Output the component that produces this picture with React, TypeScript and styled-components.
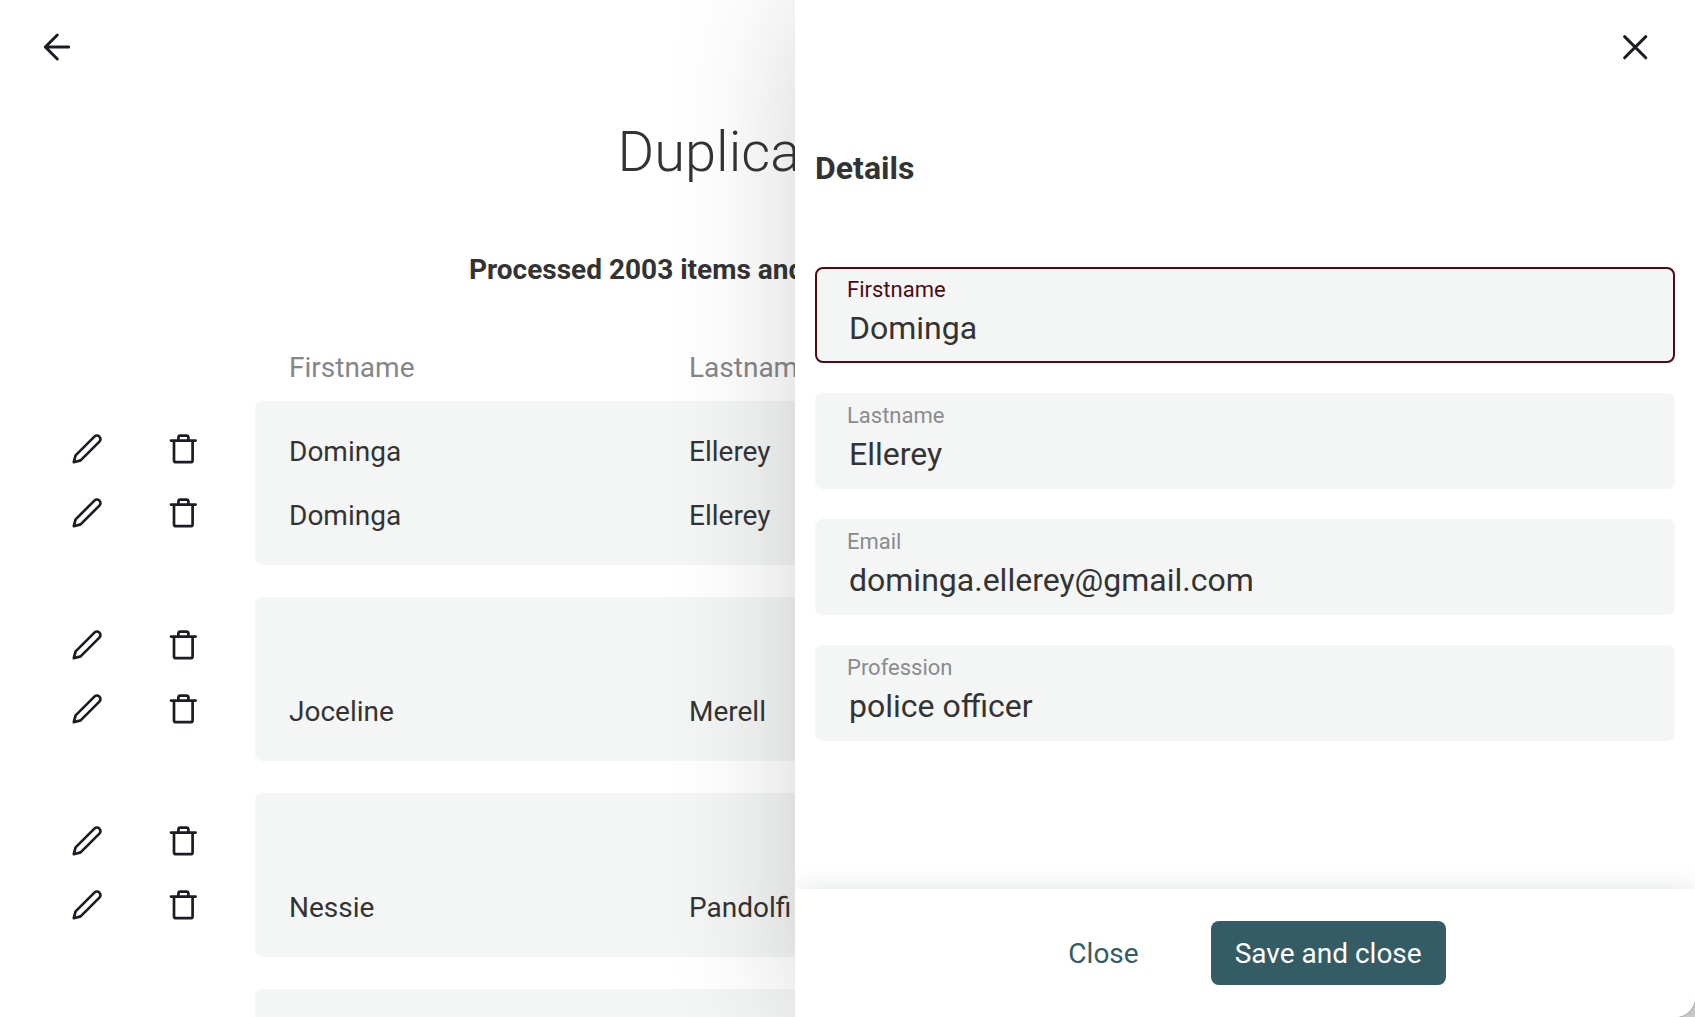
import React from "react";
import styled, { createGlobalStyle } from "styled-components";

const GlobalStyle = createGlobalStyle`
  *, *::before, *::after { box-sizing: border-box; }
  body {
    margin: 0;
    background: #c9c9ca;
    color: #333;
    font-family: Roboto, "Liberation Sans", sans-serif;
    font-size: 28px;
    line-height: 36px;
  }
  button, input { font-family: inherit; }
`;

const Shell = styled.div`
  position: relative;
  height: 100vh;
  overflow: hidden;
  background: #fff;
  border-bottom-right-radius: 20px;
  box-shadow: 0 0 2px rgba(0, 0, 0, 0.5);
`;

const Page = styled.main`
  padding: 0 39px;
`;

const TopBar = styled.header`
  display: flex;
  align-items: center;
  height: 94px;
`;

const IconButton = styled.button`
  display: inline-flex;
  padding: 2px;
  border: 0;
  background: none;
  color: #1a1d23;
  cursor: pointer;
`;

const PageTitle = styled.h1`
  margin: 24px 0 0;
  font-size: 56px;
  font-weight: 300;
  line-height: 68px;
  text-align: center;
`;

const Summary = styled.p`
  margin: 66px 0 45px;
  font-weight: 700;
  text-align: center;
`;

const Table = styled.table`
  width: 1816px;
  table-layout: fixed;
  border-collapse: separate;
  border-spacing: 0;
`;

const HeadCell = styled.th`
  height: 68px;
  padding: 2px 34px 0;
  color: #85868a;
  font-weight: 400;
  text-align: left;
`;

const ActionHead = styled.th<{ $wide?: boolean }>`
  width: ${(p) => (p.$wide ? 120 : 96)}px;
  padding: 0;
`;

const ActionCell = styled.td<{ $wide?: boolean }>`
  height: 82px;
  padding: 0 ${(p) => (p.$wide ? 24 : 0)}px 22px 0;
  line-height: 0;
  text-align: center;
  vertical-align: middle;

  tr:first-child > & {
    padding-top: 14px;
    padding-bottom: 0;
  }
`;

const DataCell = styled.td`
  height: 82px;
  padding: 0 34px 16px;
  background: #f4f6f5;

  tr:first-child > & {
    padding-top: 20px;
    padding-bottom: 0;
  }
  tr:first-child > &:nth-child(3) { border-top-left-radius: 8px; }
  tr:nth-child(2) > &:nth-child(3) { border-bottom-left-radius: 8px; }
`;

const Spacer = styled.tr`
  height: 32px;
`;

const Drawer = styled.aside`
  position: absolute;
  top: 0;
  right: 0;
  bottom: 0;
  display: flex;
  flex-direction: column;
  width: 900px;
  max-width: 100%;
  overflow: hidden;
  background: #fff;
  border-bottom-right-radius: 20px;
  box-shadow: 0 0 128px rgba(30, 40, 36, 0.2);
`;

const DrawerBar = styled(TopBar)`
  justify-content: flex-end;
  flex: none;
  padding: 0 42px;
`;

const DrawerBody = styled.form`
  flex: 1;
  padding: 54px 20px 0;
  overflow: hidden;
`;

const DrawerTitle = styled.h2`
  margin: 0 0 79px;
  font-size: 32px;
  font-weight: 700;
  line-height: 40px;
`;

const Fields = styled.div`
  display: flex;
  flex-direction: column;
  gap: 30px;
`;

const Field = styled.label<{ $active?: boolean }>`
  display: flex;
  flex-direction: column;
  gap: 3px;
  padding: 7px 30px 12px;
  border: 2px solid ${(p) => (p.$active ? "#4f0a14" : "#f4f6f5")};
  border-radius: 8px;
  background: #f4f6f5;
  color: ${(p) => (p.$active ? "#4f0a14" : "#8a8b8f")};
  font-size: 22px;
  line-height: 28px;
`;

const TextInput = styled.input`
  width: 100%;
  height: 42px;
  padding: 0 2px;
  border: 0;
  outline: 0;
  background: none;
  color: #333;
  font-size: 32px;
`;

const DrawerFooter = styled.footer`
  display: flex;
  flex: none;
  align-items: center;
  justify-content: center;
  gap: 48px;
  padding: 32px;
  background: #fff;
  box-shadow: 0 0 24px rgba(20, 35, 30, 0.12);
`;

const Button = styled.button<{ $primary?: boolean }>`
  height: 64px;
  padding: 0 24px;
  border: 0;
  border-radius: 8px;
  background: ${(p) => (p.$primary ? "#345c65" : "transparent")};
  color: ${(p) => (p.$primary ? "#fff" : "#345c65")};
  font-size: 28px;
  cursor: pointer;
`;

const Icon = ({ children }: { children: React.ReactNode }) => (
  <svg width="32" height="32" viewBox="0 0 32 32" fill="none" stroke="currentColor"
    strokeWidth="3" strokeLinecap="round" strokeLinejoin="round" aria-hidden="true">
    {children}
  </svg>
);

const BackIcon = () => (
  <Icon><path d="M27.7 16H4.3M16.3 4 4.3 16l12 12" /></Icon>
);
const CloseIcon = () => (
  <Icon><path d="M5.6 5.6 26.8 26.8M26.8 5.6 5.6 26.8" /></Icon>
);
const PencilIcon = () => (
  <Icon><path strokeWidth="2.7" d="M2.8 29.2 4.6 22.4 23.4 3.6a3.5 3.5 0 0 1 5 5L9.6 27.4Z" /></Icon>
);
const TrashIcon = () => (
  <Icon>
    <path strokeWidth="2.7" d="M4 7.6H28.6M7 7.6V27.2a2 2 0 0 0 2 2H23.6a2 2 0 0 0 2-2V7.6M11.4 7.6V4.6a2 2 0 0 1 2-2H19.4a2 2 0 0 1 2 2V7.6" />
  </Icon>
);

type Person = { first: string; last: string };

const groups: Person[][] = [
  [{ first: "Dominga", last: "Ellerey" }, { first: "Dominga", last: "Ellerey" }],
  [{ first: "", last: "" }, { first: "Joceline", last: "Merell" }],
  [{ first: "", last: "" }, { first: "Nessie", last: "Pandolfi" }],
  [{ first: "", last: "" }, { first: "", last: "" }],
];

const fields = [
  { name: "firstname", label: "Firstname", value: "Dominga", active: true },
  { name: "lastname", label: "Lastname", value: "Ellerey" },
  { name: "email", label: "Email", value: "dominga.ellerey@gmail.com" },
  { name: "profession", label: "Profession", value: "police officer" },
];

export default function App() {
  return (
    <>
      <GlobalStyle />
      <Shell>
        <Page>
          <TopBar>
            <IconButton aria-label="Back"><BackIcon /></IconButton>
          </TopBar>
          <PageTitle>Duplicate overview</PageTitle>
          <Summary>Processed 2003 items and found 1001 matching duplicates.</Summary>
          <Table>
            <thead>
              <tr>
                <ActionHead aria-label="Edit" />
                <ActionHead $wide aria-label="Delete" />
                <HeadCell>Firstname</HeadCell>
                <HeadCell>Lastname</HeadCell>
                <HeadCell>Email</HeadCell>
                <HeadCell>Profession</HeadCell>
              </tr>
            </thead>
            {groups.map((group, g) => (
              <tbody key={g}>
                {group.map((person, i) => (
                  <tr key={i}>
                    <ActionCell>
                      <IconButton aria-label="Edit"><PencilIcon /></IconButton>
                    </ActionCell>
                    <ActionCell $wide>
                      <IconButton aria-label="Delete"><TrashIcon /></IconButton>
                    </ActionCell>
                    <DataCell>{person.first}</DataCell>
                    <DataCell>{person.last}</DataCell>
                    <DataCell />
                    <DataCell />
                  </tr>
                ))}
                <Spacer />
              </tbody>
            ))}
          </Table>
        </Page>

        <Drawer aria-label="Details">
          <DrawerBar>
            <IconButton aria-label="Close details"><CloseIcon /></IconButton>
          </DrawerBar>
          <DrawerBody id="details">
            <DrawerTitle>Details</DrawerTitle>
            <Fields>
              {fields.map((f) => (
                <Field key={f.name} htmlFor={f.name} $active={f.active}>
                  {f.label}
                  <TextInput id={f.name} name={f.name} defaultValue={f.value} spellCheck={false} />
                </Field>
              ))}
            </Fields>
          </DrawerBody>
          <DrawerFooter>
            <Button type="button">Close</Button>
            <Button type="button" $primary>Save and close</Button>
          </DrawerFooter>
        </Drawer>
      </Shell>
    </>
  );
}
